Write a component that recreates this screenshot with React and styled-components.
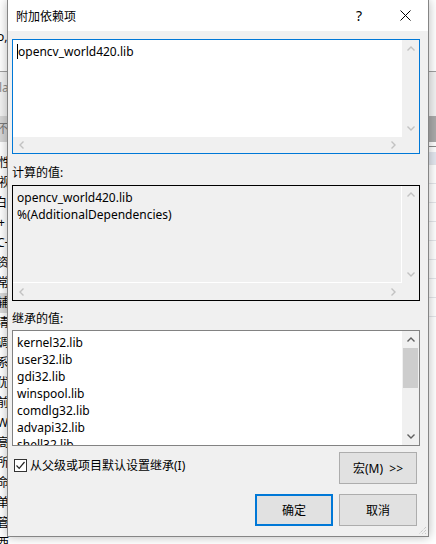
import styled, { createGlobalStyle } from "styled-components";

const GlobalStyle = createGlobalStyle`
  html, body {
    margin: 0;
    padding: 0;
    background: #fff;
  }
  body {
    font-family: "Noto Sans", "Noto Sans CJK SC", sans-serif;
    font-size: 12px;
    color: #000;
    overflow: hidden;
  }
`;

const Screen = styled.div`
  position: relative;
  width: 436px;
  height: 544px;
  overflow: hidden;
  background: #fff;
`;

/* ---------- property page behind the dialog ---------- */

const Backdrop = styled.div`
  display: flex;
  flex-direction: column;
  height: 100%;
  & > * { flex-shrink: 0; }
`;

const TopBand = styled.div`
  height: 72px;
  box-sizing: border-box;
  border-bottom: 1px solid #a0a0a0;
  padding-top: 29px;
  line-height: 16px;
  span { margin-left: -3px; }
`;

const ToolBand = styled.div`
  height: 44px;
  box-sizing: border-box;
  background: #f2f2f2;
  padding-top: 8px;
  line-height: 16px;
  color: #8c8c8c;
  span { margin-left: -1px; }
`;

const HeaderBand = styled.div`
  display: flex;
  height: 26px;
`;

const TreeHead = styled.div`
  width: 140px;
  background: #d6d6d6;
  color: #7a7a7a;
  line-height: 26px;
  span { margin-left: -3px; }
`;

const GridHead = styled.div`
  flex: 1;
  background: #aaaaaa;
`;

const Spacer = styled.div`
  display: flex;
  height: 10px;
  div:last-child {
    flex: 1;
    border-bottom: 1px solid #8a8a8a;
    margin-bottom: 5px;
  }
  div:first-child { width: 140px; }
`;

const Content = styled.div`
  display: flex;
  height: 392px;
  overflow: hidden;
`;

const TreeList = styled.div`
  width: 140px;
  padding-top: 1px;
`;

const TreeRow = styled.div`
  height: 20px;
  line-height: 20px;
  background: ${(p) => (p.$selected ? "#d9d9d9" : "transparent")};
  span { margin-left: ${(p) => p.$shift}px; }
`;

const PropGrid = styled.div`
  flex: 1;
  margin-top: -6px;
`;

const PropRow = styled.div`
  height: 18px;
  border-bottom: 1px solid #e4e6ea;
  background: ${(p) => (p.$active ? "#e3e7ef" : "transparent")};
`;

/* ---------- the dialog ---------- */

const Dialog = styled.div`
  position: absolute;
  left: 7px;
  top: 0;
  width: 422px;
  height: 537px;
  box-sizing: border-box;
  border: 1px solid #858585;
  border-top: none;
  background: #f0f0f0;
  box-shadow: 0 0 10px rgba(0, 0, 0, 0.28);
  display: flex;
  flex-direction: column;
`;

const TitleBar = styled.div`
  height: 31px;
  background: #fff;
  display: flex;
  align-items: center;
`;

const Title = styled.div`
  flex: 1;
  padding-left: 8px;
  font-size: 12px;
`;

const TitleButton = styled.div`
  width: 46px;
  height: 31px;
  display: flex;
  align-items: center;
  justify-content: center;
  font-size: 14px;
  line-height: 1;
`;

const Body = styled.div`
  flex: 1;
  display: flex;
  flex-direction: column;
  padding: 8px 8px 0 4px;
  position: relative;
`;

const EditBox = styled.div`
  height: ${(p) => p.$h}px;
  box-sizing: border-box;
  border: 1px solid ${(p) => p.$border};
  background: #f0f0f0;
  display: grid;
  grid-template-columns: 1fr 17px;
  grid-template-rows: ${(p) => (p.$hscroll ? `1fr ${p.$hscroll}px` : "1fr")};
  overflow: hidden;
`;

const TextArea = styled.div`
  background: ${(p) => p.$bg};
  padding: 3px 4px;
  line-height: 17px;
  white-space: pre;
  overflow: hidden;
  border-right: ${(p) => (p.$divider ? "1px solid #fff" : "none")};
  border-bottom: ${(p) => (p.$divider ? "1px solid #fff" : "none")};
`;

const Caret = styled.span`
  display: inline-block;
  width: 1px;
  height: 15px;
  background: #000;
  vertical-align: -3px;
`;

const VScroll = styled.div`
  display: flex;
  flex-direction: column;
  background: #f0f0f0;
`;

const HScroll = styled.div`
  display: flex;
  justify-content: space-between;
  background: #f0f0f0;
`;

const ArrowCell = styled.div`
  width: 17px;
  height: ${(p) => (p.$h ? p.$h : 17)}px;
  display: flex;
  align-items: center;
  justify-content: center;
`;

const Track = styled.div`
  flex: 1;
  display: flex;
  flex-direction: column;
  align-items: center;
`;

const Thumb = styled.div`
  width: 15px;
  height: 40px;
  background: #cdcdcd;
`;

const Corner = styled.div`
  background: #f0f0f0;
`;

const Label = styled.div`
  height: 17px;
  line-height: 17px;
  margin: ${(p) => p.$margin};
`;

const Footer = styled.div`
  display: flex;
  flex-direction: column;
  padding-right: 3px;
`;

const FooterRow = styled.div`
  display: flex;
  align-items: center;
  justify-content: ${(p) => p.$justify};
  gap: 6px;
  margin-top: ${(p) => p.$top}px;
`;

const CheckLine = styled.label`
  display: flex;
  align-items: center;
  gap: 3px;
  margin-left: 2px;
  margin-top: -6px;
  line-height: 17px;
`;

const CheckBox = styled.span`
  flex-shrink: 0;
  width: 13px;
  height: 13px;
  box-sizing: border-box;
  border: 1px solid #333;
  background: #fff;
  display: flex;
  align-items: center;
  justify-content: center;
`;

const Button = styled.button`
  width: 78px;
  height: 32px;
  box-sizing: border-box;
  border: ${(p) => (p.$default ? "2px solid #0078d7" : "1px solid #adadad")};
  background: #e1e1e1;
  font-family: inherit;
  font-size: 12px;
  color: #000;
  padding: 0;
  display: flex;
  align-items: center;
  justify-content: center;
  gap: 2px;
`;

const Grip = styled.svg`
  position: absolute;
  right: 1px;
  bottom: 1px;
`;

function Chevron({ dir, color }) {
  const vertical = dir === "up" || dir === "down";
  const pts = {
    up: "0.5,4.5 4,1 7.5,4.5",
    down: "0.5,0.5 4,4 7.5,0.5",
    left: "4.5,0.5 1,4 4.5,7.5",
    right: "0.5,0.5 4,4 0.5,7.5",
  }[dir];
  return (
    <svg
      width={vertical ? 8 : 5}
      height={vertical ? 5 : 8}
      viewBox={vertical ? "0 0 8 5" : "0 0 5 8"}
    >
      <polyline points={pts} fill="none" stroke={color} strokeWidth="1.4" />
    </svg>
  );
}

const treeItems = [
  ["性", -1], ["视", -1], ["白", -5], ["+", -2], ["C+", -3], ["资", -3],
  ["常", -3], ["辅", -3], ["清", -3], ["调", -3], ["系", -3], ["优", -3],
  ["前", -3], ["W", -3], ["高", -3], ["所", -3], ["命", -3], ["单", -3],
  ["管", -3], ["西", -3],
];

const inherited = [
  "kernel32.lib",
  "user32.lib",
  "gdi32.lib",
  "winspool.lib",
  "comdlg32.lib",
  "advapi32.lib",
  "shell32.lib",
  "ole32.lib",
];

export default function App() {
  const disabled = "#c2c2c2";
  const active = "#606060";

  return (
    <Screen>
      <GlobalStyle />
      <Backdrop>
        <TopBand>
          <span>o,</span>
        </TopBand>
        <ToolBand>
          <span>la</span>
        </ToolBand>
        <HeaderBand>
          <TreeHead>
            <span>不</span>
          </TreeHead>
          <GridHead />
        </HeaderBand>
        <Spacer>
          <div />
          <div />
        </Spacer>
        <Content>
          <TreeList>
            {treeItems.map(([t, shift], i) => (
              <TreeRow key={i} $shift={shift} $selected={i === 7}>
                <span>{t}</span>
              </TreeRow>
            ))}
          </TreeList>
          <PropGrid>
            {Array.from({ length: 9 }).map((_, i) => (
              <PropRow key={i} $active={i === 0} />
            ))}
          </PropGrid>
        </Content>
      </Backdrop>

      <Dialog>
        <TitleBar>
          <Title>附加依赖项</Title>
          <TitleButton>?</TitleButton>
          <TitleButton>
            <svg width="11" height="11" viewBox="0 0 11 11">
              <path d="M0.5 0.5 L10.5 10.5 M10.5 0.5 L0.5 10.5" stroke="#000" strokeWidth="1" />
            </svg>
          </TitleButton>
        </TitleBar>

        <Body>
          <EditBox $h={115} $border="#0078d7" $hscroll={16}>
            <TextArea $bg="#fff">
              <Caret />
              opencv_world420.lib
            </TextArea>
            <VScroll>
              <ArrowCell><Chevron dir="up" color={disabled} /></ArrowCell>
              <Track />
              <ArrowCell><Chevron dir="down" color={disabled} /></ArrowCell>
            </VScroll>
            <HScroll>
              <ArrowCell $h={16}><Chevron dir="left" color={disabled} /></ArrowCell>
              <ArrowCell $h={16}><Chevron dir="right" color={disabled} /></ArrowCell>
            </HScroll>
            <Corner />
          </EditBox>

          <Label $margin="10px 0 4px">计算的值:</Label>

          <EditBox $h={116} $border="#000" $hscroll={17}>
            <TextArea $bg="#f0f0f0" $divider>
              {"opencv_world420.lib\n%(AdditionalDependencies)"}
            </TextArea>
            <VScroll>
              <ArrowCell><Chevron dir="up" color={disabled} /></ArrowCell>
              <Track />
              <ArrowCell><Chevron dir="down" color={disabled} /></ArrowCell>
            </VScroll>
            <HScroll>
              <ArrowCell><Chevron dir="left" color={disabled} /></ArrowCell>
              <ArrowCell><Chevron dir="right" color={disabled} /></ArrowCell>
            </HScroll>
            <Corner />
          </EditBox>

          <Label $margin="9px 0 3px">继承的值:</Label>

          <EditBox $h={116} $border="#828282">
            <TextArea $bg="#fff">{inherited.join("\n")}</TextArea>
            <VScroll>
              <ArrowCell><Chevron dir="up" color={active} /></ArrowCell>
              <Track>
                <Thumb />
              </Track>
              <ArrowCell><Chevron dir="down" color={active} /></ArrowCell>
            </VScroll>
          </EditBox>

          <Footer>
            <FooterRow $top={6} $justify="space-between">
              <CheckLine>
                <CheckBox>
                  <svg width="11" height="11" viewBox="0 0 11 11">
                    <polyline points="1.5,5.5 4.2,8.3 9.5,2" fill="none" stroke="#222" strokeWidth="1.2" />
                  </svg>
                </CheckBox>
                <span>从父级或项目默认设置继承(I)</span>
              </CheckLine>
              <Button>宏(M)&nbsp;&nbsp;&gt;&gt;</Button>
            </FooterRow>
            <FooterRow $top={10} $justify="flex-end">
              <Button $default>确定</Button>
              <Button>取消</Button>
            </FooterRow>
          </Footer>

          <Grip width="10" height="10" viewBox="0 0 10 10">
            <path d="M9 2 L2 9 M9 5 L5 9 M9 8 L8 9" stroke="#b5b5b5" strokeWidth="1" strokeDasharray="1 1" />
          </Grip>
        </Body>
      </Dialog>
    </Screen>
  );
}
